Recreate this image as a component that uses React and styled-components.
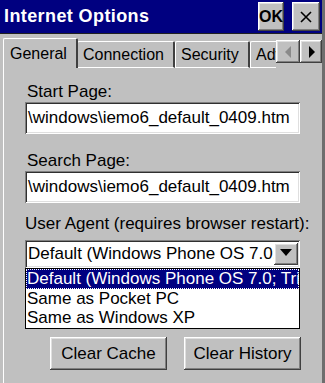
import React from "react";
import styled, { createGlobalStyle } from "styled-components";

const Global = createGlobalStyle`
  html, body { margin: 0; padding: 0; background: #c0c0c0; }
  * { box-sizing: border-box; }
`;

const raised = `
  box-shadow: inset -1px -1px #404040, inset 1px 1px #ffffff,
    inset -2px -2px #808080, inset 2px 2px #dfdfdf;
`;
const sunken = `
  box-shadow: inset 1px 1px #808080, inset -1px -1px #ffffff,
    inset 2px 2px #303030, inset -2px -2px #dfdfdf;
`;

const Window = styled.div`
  width: 325px;
  height: 383px;
  background: #c0c0c0;
  display: flex;
  flex-direction: column;
  font-family: "Liberation Sans", Arial, sans-serif;
  color: #000;
  border-right: 3px solid #6e6e6e;
  overflow: hidden;
`;

const TitleBar = styled.div`
  height: 34px;
  background: #000080;
  border-bottom: 1px solid #202020;
  display: flex;
  align-items: center;
  padding: 0 2px 0 4px;
  gap: 8px;
`;

const Title = styled.div`
  flex: 1;
  color: #fff;
  font-weight: bold;
  font-size: 18px;
  letter-spacing: 0.4px;
`;

const CapButton = styled.div`
  width: ${(p) => p.$w}px;
  height: 29px;
  background: #c0c0c0;
  ${raised}
  display: flex;
  align-items: center;
  justify-content: center;
  font-weight: bold;
  font-size: 16px;
  color: #000;
`;

const TabStrip = styled.div`
  height: 34px;
  display: flex;
  align-items: flex-end;
  padding-left: 3px;
`;

const TabList = styled.div`
  flex: 1;
  display: flex;
  align-items: flex-end;
  overflow: hidden;
  height: 100%;
`;

const Tab = styled.div`
  flex: none;
  width: ${(p) => p.$w}px;
  height: ${(p) => (p.$active ? 30 : 27)}px;
  border-top: 1px solid #fff;
  border-left: 1px solid #fff;
  border-right: 2px solid #404040;
  border-top-left-radius: 2px;
  border-top-right-radius: 2px;
  border-bottom: ${(p) => (p.$active ? "none" : "1px solid #fff")};
  display: flex;
  align-items: center;
  padding-left: ${(p) => (p.$active ? 6 : 5)}px;
  font-size: 16px;
  white-space: nowrap;
  overflow: hidden;
  margin-right: ${(p) => (p.$active ? -1 : 0)}px;
  position: relative;
  z-index: ${(p) => (p.$active ? 1 : 0)};
`;

const Arrows = styled.div`
  display: flex;
  align-self: flex-start;
  margin-top: 6px;
`;

const ArrowBtn = styled.div`
  width: ${(p) => p.$w}px;
  height: 23px;
  background: #c0c0c0;
  ${raised}
  display: flex;
  align-items: center;
  justify-content: center;
`;

const Panel = styled.div`
  flex: 1;
  border-left: 1px solid #fff;
  display: flex;
  flex-direction: column;
  padding: 14px 0 0 21px;
  margin-left: 3px;
`;

const Label = styled.div`
  font-size: 17px;
  line-height: 20px;
  height: 20px;
  white-space: nowrap;
  margin: ${(p) => p.$m || "0"};
`;

const TextBox = styled.div`
  width: 275px;
  height: 32px;
  background: #fff;
  ${sunken}
  display: flex;
  align-items: center;
  padding: 0 3px;
  font-size: 17px;
  white-space: nowrap;
  overflow: hidden;
`;

const Combo = styled.div`
  width: 275px;
  height: 28px;
  background: #fff;
  ${sunken}
  display: flex;
  align-items: center;
  padding: 2px 2px 2px 3px;
  font-size: 17px;
  margin-top: 6px;
`;

const ComboText = styled.div`
  flex: 1;
  white-space: nowrap;
  overflow: hidden;
`;

const DropBtn = styled.div`
  width: 24px;
  height: 22px;
  background: #c0c0c0;
  ${raised}
  display: flex;
  align-items: center;
  justify-content: center;
`;

const List = styled.div`
  width: 275px;
  height: 61px;
  background: #fff;
  border: 1px solid #000;
  display: flex;
  flex-direction: column;
  font-size: 17px;
  overflow: hidden;
`;

const Item = styled.div`
  height: 20px;
  line-height: 19px;
  padding-left: 1px;
  white-space: nowrap;
  overflow: hidden;
  background: ${(p) => (p.$sel ? "#000080" : "transparent")};
  color: ${(p) => (p.$sel ? "#fff" : "#000")};
  outline: ${(p) => (p.$sel ? "1px dotted #fff" : "none")};
  outline-offset: -1px;
`;

const ButtonRow = styled.div`
  display: flex;
  gap: 17px;
  margin: 8px 0 0 25px;
`;

const Button = styled.div`
  width: 117px;
  height: 33px;
  background: #c0c0c0;
  ${raised}
  display: flex;
  align-items: center;
  justify-content: center;
  font-size: 17px;
`;

const Tri = ({ dir, color }) => {
  const pts =
    dir === "left" ? "9,4 9,16 3,10" : dir === "right" ? "4,4 4,16 10,10" : "2,5 14,5 8,12";
  const w = dir === "down" ? 16 : 13;
  return (
    <svg width={w} height="20" viewBox={`0 0 ${w} 20`}>
      <polygon points={pts} fill={color} />
    </svg>
  );
};

export default function App() {
  return (
    <>
      <Global />
      <Window>
        <TitleBar>
          <Title>Internet Options</Title>
          <CapButton $w={26}>OK</CapButton>
          <CapButton $w={28}>
            <svg width="14" height="14" viewBox="0 0 14 14">
              <path d="M2 2 L12 12 M12 2 L2 12" stroke="#000" strokeWidth="1.6" />
            </svg>
          </CapButton>
        </TitleBar>
        <TabStrip>
          <TabList>
            <Tab $active $w={75}>General</Tab>
            <Tab $w={98}>Connection</Tab>
            <Tab $w={75}>Security</Tab>
            <Tab $w={60}>Advanced</Tab>
          </TabList>
          <Arrows>
            <ArrowBtn $w={24}>
              <Tri dir="left" color="#8a8a8a" />
            </ArrowBtn>
            <ArrowBtn $w={22}>
              <Tri dir="right" color="#000" />
            </ArrowBtn>
          </Arrows>
        </TabStrip>
        <Panel>
          <Label $m="0 0 0 2px">Start Page:</Label>
          <TextBox>\windows\iemo6_default_0409.htm</TextBox>
          <Label $m="17px 0 0 2px">Search Page:</Label>
          <TextBox>\windows\iemo6_default_0409.htm</TextBox>
          <Label $m="11px 0 0 0">User Agent (requires browser restart):</Label>
          <Combo>
            <ComboText>Default (Windows Phone OS 7.0; Trident/3.1; IEMobile/7.0)</ComboText>
            <DropBtn>
              <Tri dir="down" color="#000" />
            </DropBtn>
          </Combo>
          <List>
            <Item $sel>Default (Windows Phone OS 7.0; Trident/3.1; IEMobile/7.0)</Item>
            <Item>Same as Pocket PC</Item>
            <Item>Same as Windows XP</Item>
          </List>
          <ButtonRow>
            <Button>Clear Cache</Button>
            <Button>Clear History</Button>
          </ButtonRow>
        </Panel>
      </Window>
    </>
  );
}
